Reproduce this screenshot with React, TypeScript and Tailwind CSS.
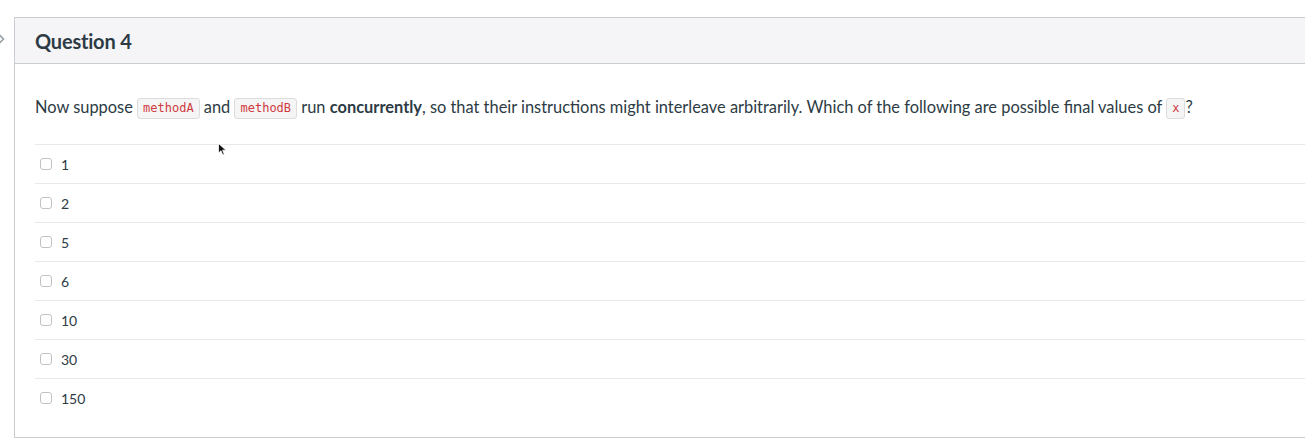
import React from 'react';

const answers = ['1', '2', '5', '6', '10', '30', '150'];

function Code({ children }: { children: React.ReactNode }) {
  return (
    <code className="inline-block rounded-[3px] border border-[#dcdcdc] bg-[#f5f5f5] px-[5px] py-[1px] align-[1px] font-['DejaVu_Sans_Mono',monospace] text-[12px] leading-[17px] text-[#d0393e]">
      {children}
    </code>
  );
}

export default function App() {
  return (
    <div className="relative h-[442px] w-[1305px] overflow-hidden bg-white pl-[14px] pt-[17px] font-['Lato',sans-serif] text-[#2d3b45]">
      {/* collapsed nav chevron, cut by the window edge */}
      <svg className="absolute left-[-5px] top-[32px]" width="12" height="14" viewBox="0 0 12 14" fill="none">
        <path d="M3 1.5 L8.5 7 L3 12.5" stroke="#9aa3a8" strokeWidth="1.6" />
      </svg>

      <div className="flex h-[421px] flex-col border-y border-l border-[#c7cdd1]">
        <div className="flex h-[46px] shrink-0 items-center border-b border-[#c7cdd1] bg-[#f5f5f7] px-[20px] pt-[1px]">
          <h2 className="text-[20px] font-bold tracking-[-0.2px] text-[#2d3b45]">Question 4</h2>
        </div>

        <div className="flex-1 pl-[20px] pt-[32px]">
          <p className="text-[16.4px] leading-[22px]">
            Now suppose <Code>methodA</Code> and <Code>methodB</Code> run <strong className="font-bold">concurrently</strong>, so
            that their instructions might interleave arbitrarily. Which of the following are possible final values of{' '}
            <Code>x</Code>?
          </p>

          <ul className="mt-[25px]">
            {answers.map((a) => (
              <li key={a} className="flex h-[39px] items-center border-t border-[#ece7ea] pl-[5px]">
                <span className="h-[12px] w-[12px] rounded-[3px] border border-[#bfc3c6] bg-white" />
                <span className="ml-[9px] text-[14px] text-[#2d3b45]">{a}</span>
              </li>
            ))}
          </ul>
        </div>
      </div>

      {/* mouse pointer */}
      <svg className="absolute left-[218px] top-[143px]" width="9" height="13" viewBox="0 0 9 13">
        <path d="M0.5 0.5 L0.5 10 L3 7.8 L4.8 12 L6.3 11.3 L4.6 7.2 L8 7.2 Z" fill="#111" stroke="#fff" strokeWidth="0.8" />
      </svg>
    </div>
  );
}
